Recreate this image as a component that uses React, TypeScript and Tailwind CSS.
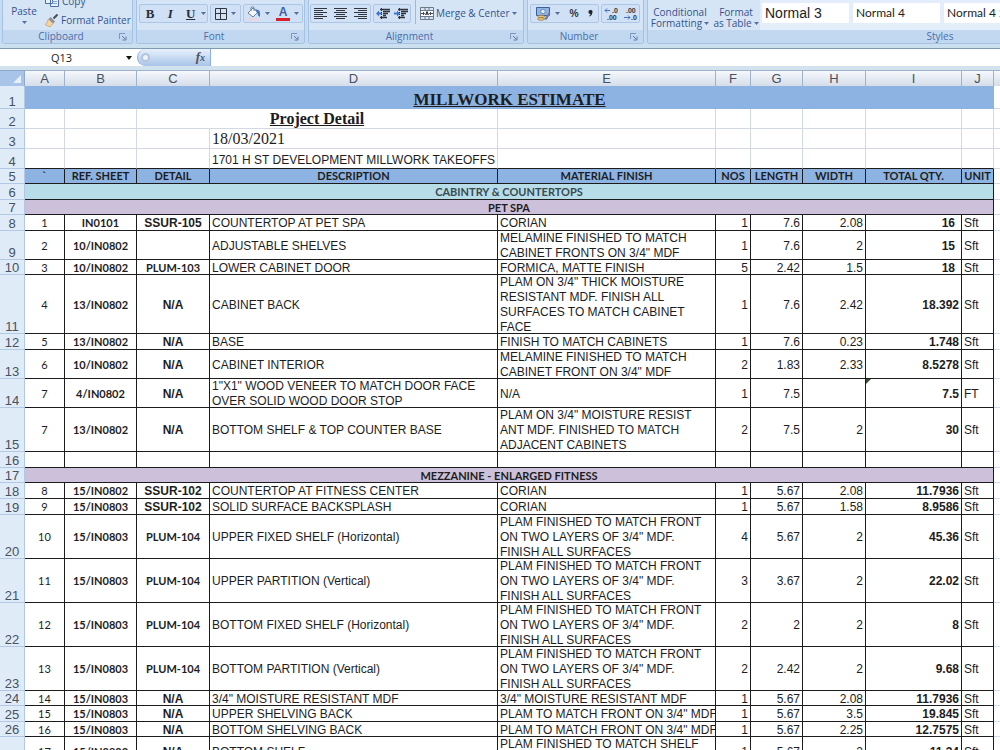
import React from 'react';
import clsx from 'clsx';

const columns = [
  { name: 'A', width: 'w-[40px]' },
  { name: 'B', width: 'w-[72px]' },
  { name: 'C', width: 'w-[73px]' },
  { name: 'D', width: 'w-[288px]' },
  { name: 'E', width: 'w-[218px]' },
  { name: 'F', width: 'w-[35px]' },
  { name: 'G', width: 'w-[52px]' },
  { name: 'H', width: 'w-[63px]' },
  { name: 'I', width: 'w-[96px]' },
  { name: 'J', width: 'w-[32px]' },
];

type Item = {
  row: number;
  h: string;
  no?: string;
  sheet?: string;
  detail?: string;
  desc?: string[];
  finish?: string[];
  nos?: string;
  length?: string;
  width?: string;
  total?: string;
  unit?: string;
  indent?: boolean;
  note?: boolean;
};

const petSpa: Item[] = [
  { row: 8, h: 'h-[15px]', no: '1', sheet: 'IN0101', detail: 'SSUR-105', desc: ['COUNTERTOP AT PET SPA'], finish: ['CORIAN'], nos: '1', length: '7.6', width: '2.08', total: '16', unit: 'Sft', indent: true },
  { row: 9, h: 'h-[28px]', no: '2', sheet: '10/IN0802', detail: '', desc: ['ADJUSTABLE SHELVES'], finish: ['MELAMINE FINISHED TO MATCH', 'CABINET FRONTS ON 3/4" MDF'], nos: '1', length: '7.6', width: '2', total: '15', unit: 'Sft', indent: true },
  { row: 10, h: 'h-[14px]', no: '3', sheet: '10/IN0802', detail: 'PLUM-103', desc: ['LOWER CABINET DOOR'], finish: ['FORMICA, MATTE FINISH'], nos: '5', length: '2.42', width: '1.5', total: '18', unit: 'Sft', indent: true },
  { row: 11, h: 'h-[58px]', no: '4', sheet: '13/IN0802', detail: 'N/A', desc: ['CABINET BACK'], finish: ['PLAM ON 3/4" THICK MOISTURE', 'RESISTANT MDF. FINISH ALL', 'SURFACES TO MATCH CABINET', 'FACE'], nos: '1', length: '7.6', width: '2.42', total: '18.392', unit: 'Sft' },
  { row: 12, h: 'h-[15px]', no: '5', sheet: '13/IN0802', detail: 'N/A', desc: ['BASE'], finish: ['FINISH TO MATCH CABINETS'], nos: '1', length: '7.6', width: '0.23', total: '1.748', unit: 'Sft' },
  { row: 13, h: 'h-[28px]', no: '6', sheet: '10/IN0802', detail: 'N/A', desc: ['CABINET INTERIOR'], finish: ['MELAMINE FINISHED TO MATCH', 'CABINET FRONT ON 3/4" MDF'], nos: '2', length: '1.83', width: '2.33', total: '8.5278', unit: 'Sft' },
  { row: 14, h: 'h-[28px]', no: '7', sheet: '4/IN0802', detail: 'N/A', desc: ['1"X1" WOOD VENEER TO MATCH DOOR FACE', 'OVER SOLID WOOD DOOR STOP'], finish: ['N/A'], nos: '1', length: '7.5', width: '', total: '7.5', unit: 'FT', note: true },
  { row: 15, h: 'h-[43px]', no: '7', sheet: '13/IN0802', detail: 'N/A', desc: ['BOTTOM SHELF & TOP COUNTER BASE'], finish: ['PLAM ON 3/4" MOISTURE RESIST', 'ANT MDF. FINISHED TO MATCH', 'ADJACENT CABINETS'], nos: '2', length: '7.5', width: '2', total: '30', unit: 'Sft' },
  { row: 16, h: 'h-[15px]' },
];

const plamFront = ['PLAM FINISHED TO MATCH FRONT', 'ON TWO LAYERS OF 3/4" MDF.', 'FINISH ALL SURFACES'];

const fitness: Item[] = [
  { row: 18, h: 'h-[15px]', no: '8', sheet: '15/IN0802', detail: 'SSUR-102', desc: ['COUNTERTOP AT FITNESS CENTER'], finish: ['CORIAN'], nos: '1', length: '5.67', width: '2.08', total: '11.7936', unit: 'Sft' },
  { row: 19, h: 'h-[15px]', no: '9', sheet: '15/IN0803', detail: 'SSUR-102', desc: ['SOLID SURFACE BACKSPLASH'], finish: ['CORIAN'], nos: '1', length: '5.67', width: '1.58', total: '8.9586', unit: 'Sft' },
  { row: 20, h: 'h-[43px]', no: '10', sheet: '15/IN0803', detail: 'PLUM-104', desc: ['UPPER FIXED SHELF (Horizontal)'], finish: plamFront, nos: '4', length: '5.67', width: '2', total: '45.36', unit: 'Sft' },
  { row: 21, h: 'h-[43px]', no: '11', sheet: '15/IN0803', detail: 'PLUM-104', desc: ['UPPER PARTITION (Vertical)'], finish: plamFront, nos: '3', length: '3.67', width: '2', total: '22.02', unit: 'Sft' },
  { row: 22, h: 'h-[43px]', no: '12', sheet: '15/IN0803', detail: 'PLUM-104', desc: ['BOTTOM FIXED SHELF (Horizontal)'], finish: plamFront, nos: '2', length: '2', width: '2', total: '8', unit: 'Sft' },
  { row: 23, h: 'h-[43px]', no: '13', sheet: '15/IN0803', detail: 'PLUM-104', desc: ['BOTTOM PARTITION (Vertical)'], finish: plamFront, nos: '2', length: '2.42', width: '2', total: '9.68', unit: 'Sft' },
  { row: 24, h: 'h-[14px]', no: '14', sheet: '15/IN0803', detail: 'N/A', desc: ['3/4" MOISTURE RESISTANT MDF'], finish: ['3/4" MOISTURE RESISTANT MDF'], nos: '1', length: '5.67', width: '2.08', total: '11.7936', unit: 'Sft' },
  { row: 25, h: 'h-[15px]', no: '15', sheet: '15/IN0803', detail: 'N/A', desc: ['UPPER SHELVING BACK'], finish: ['PLAM TO MATCH FRONT ON 3/4" MDF'], nos: '1', length: '5.67', width: '3.5', total: '19.845', unit: 'Sft' },
  { row: 26, h: 'h-[14px]', no: '16', sheet: '15/IN0803', detail: 'N/A', desc: ['BOTTOM SHELVING BACK'], finish: ['PLAM TO MATCH FRONT ON 3/4" MDF'], nos: '1', length: '5.67', width: '2.25', total: '12.7575', unit: 'Sft' },
  { row: 27, h: 'h-[28px]', no: '17', sheet: '15/IN0803', detail: 'N/A', desc: ['BOTTOM SHELF'], finish: ['PLAM FINISHED TO MATCH SHELF', 'FRONT ON 3/4" MDF'], nos: '1', length: '5.67', width: '2', total: '11.34', unit: 'Sft' },
];

const ink = 'border-r border-b border-[#1c1c1c]';
const faint = 'border-r border-b border-[#d3d9e3]';

/* ---------- Ribbon ---------- */

const Arrow = () => (
  <svg width="5" height="3" viewBox="0 0 5 3" className="shrink-0" aria-hidden="true">
    <path d="M0 0h5L2.5 3z" fill="#56709c" />
  </svg>
);

const Launcher = ({ label }: { label: string }) => (
  <button aria-label={label} className="h-[9px] w-[9px]">
    <svg width="8" height="8" viewBox="0 0 8 8" fill="none" aria-hidden="true">
      <path d="M.5 6V.5H6" stroke="#7d97bd" />
      <path d="M3 3l3 3M7 3.500V7H3.500" stroke="#5f7ba8" />
    </svg>
  </button>
);

type GroupProps = { title: string; className: string; launcher?: boolean; children: React.ReactNode };

const Group = ({ title, className, launcher = true, children }: GroupProps) => (
  <section
    aria-label={title}
    className={clsx('flex shrink-0 flex-col overflow-hidden rounded-b-[3px] border-x border-b border-[#a6c2e2] bg-[#d6e5f6]', className)}
  >
    <div className="flex h-[30px] overflow-hidden">{children}</div>
    <div className="flex h-[13px] items-center bg-[#c2d8f0] pr-1 text-[10px] text-[#4a6ea9]">
      <span className="flex-1 text-center leading-[13px]">{title}</span>
      {launcher && <Launcher label={`${title} options`} />}
    </div>
  </section>
);

const ToolBox = ({ className, children }: { className: string; children: React.ReactNode }) => (
  <div className={clsx('mt-1 flex h-[19px] shrink-0 items-center justify-around rounded-[2px] border border-[#aec6e5] bg-[#d0e1f5]', className)}>
    {children}
  </div>
);

const Tool = ({ label, children }: { label: string; children: React.ReactNode }) => (
  <button aria-label={label} className="flex h-[17px] items-center gap-1">
    {children}
  </button>
);

const AlignIcon = ({ kind }: { kind: 'left' | 'center' | 'right' }) => {
  const x = { left: 0, center: 2, right: 4 }[kind];
  return (
    <svg width="13" height="11" viewBox="0 0 13 11" stroke="#30343c" aria-hidden="true">
      <path d={`M0 .5h13M${x} 2.500h9M0 4.500h13M${x} 6.500h9M0 8.500h13M${x} 10.500h9`} />
    </svg>
  );
};

const IndentIcon = ({ more }: { more?: boolean }) => (
  <svg width="14" height="12" viewBox="0 0 14 12" aria-hidden="true">
    <path d="M4 1.500h10M7 3.500h7M7 5.500h5M7 7.500h3M4 9.500h7" stroke="#30343c" strokeWidth="1.400" />
    <path d={more ? 'M6 5.500L3 2.500v2H0v2h3v2z' : 'M0 5.500l3-3v2h3v2H3v2z'} fill="#3f74c4" />
    <path d="M5.500 0v12" stroke="#30343c" strokeDasharray="1 1" />
  </svg>
);

const MergeIcon = () => (
  <svg width="14" height="13" viewBox="0 0 14 13" fill="none" className="shrink-0" aria-hidden="true">
    <path d="M.5.5h13v12H.5zM.5 3.500h13M.5 9.500h13M5 .5v3M9 .5v3M5 9.500v3M9 9.500v3" stroke="#6f7885" />
    <path d="M1 4h12v5H1z" fill="#fff" />
    <path d="M1 6.500h3M13 6.500h-3M3 5l1.500 1.500L3 8M11 5L9.500 6.500 11 8" stroke="#3a4b6c" />
    <path d="M5.500 8L7 4.500 8.500 8M6 7h2" stroke="#222" />
  </svg>
);

const BucketIcon = () => (
  <svg width="14" height="15" viewBox="0 0 14 15" aria-hidden="true">
    <path d="M0 12h13v3H0z" fill="#ead7e6" />
    <path d="M6 2l5 4-5 5-5-4z" fill="#f5f8fc" stroke="#6d7f9c" />
    <path d="M4 5V1.500Q5.500 0 7 1.500V5" fill="none" stroke="#6d7f9c" />
    <path d="M8 3.500q5-.5 5 3.500v4l-2-1.500Q11 7 9.500 6z" fill="#4476bd" />
  </svg>
);

const BrushIcon = () => (
  <svg width="13" height="13" viewBox="0 0 13 13" className="shrink-0" aria-hidden="true">
    <path d="M12.500 .5L8.500 4.500" stroke="#4b4b55" strokeWidth="2" />
    <path d="M5.500 3l4.500 4.500-2 2L3.500 5z" fill="#8a8f9c" />
    <path d="M3.500 5l4.500 4.500L5 13 0 10.500q2.500-1.500 3.500-5.500z" fill="#f3d6a2" stroke="#b98a4a" strokeWidth=".6" />
  </svg>
);

const CurrencyIcon = () => (
  <svg width="15" height="14" viewBox="0 0 15 14" aria-hidden="true">
    <path d="M.5.5h13v8H.5z" fill="#8fb4e4" stroke="#3b5f9c" />
    <circle cx="7" cy="4.500" r="2.200" fill="#e3eefb" stroke="#3b5f9c" strokeWidth=".6" />
    <path d="M8 12l5-7 1.500 1.500-4 6.500z" fill="#6f7f9f" />
    <ellipse cx="5" cy="9.500" rx="3.500" ry="1.300" fill="#e8c47a" stroke="#8a6a2a" strokeWidth=".6" />
    <ellipse cx="5" cy="12" rx="3.500" ry="1.300" fill="#e8c47a" stroke="#8a6a2a" strokeWidth=".6" />
  </svg>
);

const DecimalIcon = ({ more }: { more?: boolean }) => (
  <svg width="14" height="14" viewBox="0 0 14 14" fontSize="7" fontWeight="bold" fontFamily="Liberation Sans, sans-serif" fill="#30343c" aria-hidden="true">
    <text x={more ? 8 : 3} y="6">{more ? '.0' : '.00'}</text>
    <text x={more ? 3 : 8} y="13">{more ? '.00' : '.0'}</text>
    <path d={more ? 'M1 3.500h5M3 1.500l-2 2 2 2' : 'M1 10.500h6M5 8.500l2 2-2 2'} fill="none" stroke="#3f74c4" />
  </svg>
);

const StyleCard = ({ name, className }: { name: string; className: string }) => (
  <button className={clsx('h-5 w-[87px] shrink-0 overflow-hidden bg-white px-[3px] text-left whitespace-nowrap text-[#1d1d1d]', className)}>
    {name}
  </button>
);

const Ribbon = () => (
  <header className="h-[49px] overflow-hidden border-b border-[#7e9ab5] bg-[#cbe0ee] font-['Open_Sans',sans-serif] text-[10px] text-[#34548c]">
    <div className="flex h-[44px] gap-[3px] bg-[#c5dbf2] pl-[2px]">
      <Group title="Clipboard" className="w-[131px]">
        <button className="flex w-[42px] shrink-0 flex-col items-center justify-end gap-1 pb-[6px] leading-3">
          <span>Paste</span>
          <Arrow />
        </button>
        <div className="flex flex-1 flex-col justify-end">
          <button className="flex h-[18px] items-center gap-[3px] leading-[18px]">
            <svg width="14" height="12" viewBox="0 0 14 12" aria-hidden="true">
              <path d="M.5.5h7v8h-7zM5.500 3.500h8v8h-8z" fill="#e8f1fc" stroke="#4a6ea9" />
              <path d="M7 6.500h5M7 8.500h5" stroke="#7ea0d3" />
            </svg>
            Copy
          </button>
          <button className="flex h-[20px] items-center gap-[3px] leading-5 whitespace-nowrap">
            <BrushIcon />
            Format Painter
          </button>
        </div>
      </Group>

      <Group title="Font" className="w-[169px]">
        <div className="flex gap-[2px] pl-[2px] text-[#2b2f38]">
          <ToolBox className="w-[69px]">
            <button className="w-[19px] font-['Liberation_Serif',serif] text-[13px] font-bold">B</button>
            <button className="w-[19px] font-['Liberation_Serif',serif] text-[13px] font-bold italic">I</button>
            <button className="w-[19px] font-['Liberation_Serif',serif] text-[13px] font-bold underline">U</button>
            <Arrow />
          </ToolBox>
          <ToolBox className="w-[31px]">
            <Tool label="Borders">
              <svg width="12" height="12" viewBox="0 0 12 12" fill="none" stroke="#30343c" aria-hidden="true">
                <path d="M.5.5h11v11H.5zM5.500 .5v11M.5 5.500h11" />
              </svg>
              <Arrow />
            </Tool>
          </ToolBox>
          <ToolBox className="w-[60px]">
            <Tool label="Fill color">
              <BucketIcon />
              <Arrow />
            </Tool>
            <Tool label="Font color">
              <span className="w-[14px] border-b-[3px] border-[#d6202a] text-center font-['Liberation_Sans',sans-serif] text-[12px] leading-[12px] font-bold text-[#3d62a0]">A</span>
              <Arrow />
            </Tool>
          </ToolBox>
        </div>
      </Group>

      <Group title="Alignment" className="w-[216px]">
        <div className="flex gap-[2px] pl-[1px]">
          <ToolBox className="w-[61px]">
            <Tool label="Align left"><AlignIcon kind="left" /></Tool>
            <Tool label="Align center"><AlignIcon kind="center" /></Tool>
            <Tool label="Align right"><AlignIcon kind="right" /></Tool>
          </ToolBox>
          <ToolBox className="w-[38px]">
            <Tool label="Decrease indent"><IndentIcon /></Tool>
            <Tool label="Increase indent"><IndentIcon more /></Tool>
          </ToolBox>
          <div className="ml-[2px] h-6 w-px bg-[#9fb9da]" />
          <button className="mt-1 ml-[2px] flex h-[19px] items-center gap-[2px] whitespace-nowrap">
            <MergeIcon />
            Merge &amp; Center
            <Arrow />
          </button>
        </div>
      </Group>

      <Group title="Number" className="w-[117px]">
        <div className="flex gap-[2px] pl-[2px] text-[#2b2f38]">
          <ToolBox className="w-[69px]">
            <Tool label="Accounting format">
              <CurrencyIcon />
              <Arrow />
            </Tool>
            <button className="text-[11px] font-semibold">%</button>
            <button aria-label="Comma style" className="flex h-[17px] items-center">
              <svg width="5" height="7" viewBox="0 0 5 7" aria-hidden="true">
                <path d="M2.300 0A2 2 0 0 1 4.500 2.200Q4.500 5 1.500 6.500L1 6Q2.500 5 2.500 4A2 2 0 0 1 2.300 0z" fill="#22262e" />
              </svg>
            </button>
          </ToolBox>
          <ToolBox className="w-[39px]">
            <Tool label="Increase decimal"><DecimalIcon more /></Tool>
            <Tool label="Decrease decimal"><DecimalIcon /></Tool>
          </ToolBox>
        </div>
      </Group>

      <Group title="Styles" className="w-[590px]" launcher={false}>
        <button className="w-[64px] pt-[5px] leading-[11px]">
          Conditional
          <span className="flex items-center justify-center gap-[2px]">Formatting <Arrow /></span>
        </button>
        <button className="w-[48px] pt-[5px] leading-[11px]">
          Format
          <span className="flex items-center justify-center gap-[2px] whitespace-nowrap">as Table <Arrow /></span>
        </button>
        <div className="flex gap-[4px] bg-[#e4eefa] px-[2px] pt-[3px]">
          <StyleCard name="Normal 3" className="font-['Liberation_Sans',sans-serif] text-[14px] leading-4" />
          <StyleCard name="Normal 4" className="font-['Lato',sans-serif] text-[12px]" />
          <StyleCard name="Normal 4 2" className="font-['Lato',sans-serif] text-[12px]" />
        </div>
      </Group>
    </div>
  </header>
);

const FormulaBar = () => (
  <div className="flex h-[21px] border-b-4 border-[#d3e3ee] bg-white">
    <div className="flex w-[137px] items-center pr-[5px]">
      <input
        aria-label="Name box"
        defaultValue="Q13"
        className="w-[123px] bg-transparent text-center font-['Open_Sans',sans-serif] text-[11px] leading-4 text-[#1d1d1d] outline-none"
      />
      <svg width="6" height="4" viewBox="0 0 6 4" className="ml-[3px]" aria-hidden="true">
        <path d="M0 0h6L3 4z" fill="#111" />
      </svg>
    </div>
    <div className="flex w-[74px] items-center justify-between rounded-l-full border-r border-l border-[#8fb0da] bg-linear-to-b from-[#e8f1fb] to-[#a9c4ea] pr-[5px] pl-[3px]">
      <span className="h-[9px] w-[9px] rounded-full border-2 border-[#b4c4da] bg-[#eef3f9]" />
      <button className="font-['Liberation_Serif',serif] text-[13px] leading-4 font-bold text-[#4a5262] italic">
        f<span className="text-[10px]">x</span>
      </button>
    </div>
    <input aria-label="Formula" className="min-w-0 flex-1 bg-white px-1 text-[11px] outline-none" />
  </div>
);

/* ---------- Sheet ---------- */

const RowHead = ({ row }: { row: number }) => (
  <th scope="row" className="border-r border-b border-[#b3c8e4] bg-[#e0ebf8] p-0 align-bottom text-[13px] leading-[13px] font-normal text-[#47515f]">
    <div className="flex h-0 items-end justify-center">{row}</div>
  </th>
);

const Tail = () => <td className="border-b border-[#d3d9e3] p-0" />;

const Band = ({ row, h, className, children }: { row: number; h: string; className: string; children: React.ReactNode }) => (
  <tr>
    <RowHead row={row} />
    <td colSpan={10} className={clsx('p-0 text-center', className)}>
      <div className={clsx('flex items-center justify-center', h)}>{children}</div>
    </td>
    <Tail />
  </tr>
);

const ItemRow = ({ item }: { item: Item }) => {
  const box = clsx('flex items-center', item.h);
  const arial = clsx(box, 'pt-[2px]');
  const calibri = "font-['Lato',sans-serif] text-[11px] lining-nums";
  const plum = item.detail?.startsWith('PLUM');
  const lines = (list?: string[]) => (
    <div className={clsx(arial, 'pl-[2px] whitespace-nowrap')}>
      <span>{list?.map((line) => <span key={line} className="block">{line}</span>)}</span>
    </div>
  );
  return (
    <tr>
      <RowHead row={item.row} />
      <td className={clsx(ink, calibri, 'p-0')}><div className={clsx(box, 'justify-center')}>{item.no}</div></td>
      <td className={clsx(ink, calibri, 'p-0 font-bold')}><div className={clsx(box, 'justify-center')}>{item.sheet}</div></td>
      <td className={clsx(ink, 'p-0 font-bold', plum && calibri)}>
        <div className={clsx(plum ? box : arial, 'justify-center')}>{item.detail}</div>
      </td>
      <td className={clsx(ink, 'p-0')}>{lines(item.desc)}</td>
      <td className={clsx(ink, 'overflow-hidden p-0')}>{lines(item.finish)}</td>
      <td className={clsx(ink, 'p-0')}><div className={clsx(arial, 'justify-end pr-[2px]')}>{item.nos}</div></td>
      <td className={clsx(ink, 'p-0')}><div className={clsx(arial, 'justify-end pr-[2px]')}>{item.length}</div></td>
      <td className={clsx(ink, 'p-0')}><div className={clsx(arial, 'justify-end pr-[2px]')}>{item.width}</div></td>
      <td className={clsx(ink, 'relative p-0 font-bold')}>
        {item.note && (
          <svg width="5" height="5" viewBox="0 0 5 5" className="absolute top-0 left-0" aria-hidden="true">
            <path d="M0 0h5L0 5z" fill="#3c4a3c" />
          </svg>
        )}
        <div className={clsx(arial, 'justify-end', item.indent ? 'pr-[6px]' : 'pr-[2px]')}>{item.total}</div>
      </td>
      <td className={clsx(ink, 'p-0')}><div className={clsx(arial, 'pl-[2px]')}>{item.unit}</div></td>
      <Tail />
    </tr>
  );
};

const headings = ['`', 'REF. SHEET', 'DETAIL', 'DESCRIPTION', 'MATERIAL FINISH', 'NOS', 'LENGTH', 'WIDTH', 'TOTAL QTY.', 'UNIT'];

const Sheet = () => (
  <table className="w-full table-fixed border-separate border-spacing-0 font-['Liberation_Sans',sans-serif] text-[12px] leading-[15px] text-[#1d1d1d]">
    <colgroup>
      <col className="w-[25px]" />
      {columns.map((c) => <col key={c.name} className={c.width} />)}
      <col />
    </colgroup>
    <thead>
      <tr className="bg-linear-to-b from-[#f8fafd] to-[#d5dde9] text-[13px] text-[#47515f]">
        <th className="border-t border-r border-[#8fa9cc] bg-[#a9c4e9] p-0">
          <svg width="8" height="8" viewBox="0 0 8 8" className="mr-[3px] ml-auto" aria-hidden="true">
            <path d="M8 0v8H0z" fill="#e6effa" />
          </svg>
        </th>
        {columns.map((c) => (
          <th key={c.name} scope="col" className="border-t border-r border-[#9db3cd] p-0 font-normal">{c.name}</th>
        ))}
        <th className="border-t border-[#9db3cd] p-0" />
      </tr>
    </thead>
    <tbody>
      <Band row={1} h="h-[23px]" className="bg-[#8db3e2]">
        <span className="pt-[3px] font-['Liberation_Serif',serif] text-[17px] font-bold underline">MILLWORK ESTIMATE</span>
      </Band>
      <tr>
        <RowHead row={2} />
        <td className={clsx(faint, 'p-0')} />
        <td className={clsx(faint, 'p-0')} />
        <td colSpan={2} className={clsx(faint, 'p-0')}>
          <div className="flex h-[19px] items-center justify-center font-['Liberation_Serif',serif] text-[16px] font-bold underline">Project Detail</div>
        </td>
        {columns.slice(4).map((c) => <td key={c.name} className={clsx(faint, 'p-0')} />)}
        <Tail />
      </tr>
      <tr>
        <RowHead row={3} />
        {columns.map((c) => (
          <td key={c.name} className={clsx(faint, 'p-0')}>
            {c.name === 'D' && <div className="flex h-[19px] items-center pl-[2px] font-['Liberation_Serif',serif] text-[16px]">18/03/2021</div>}
          </td>
        ))}
        <Tail />
      </tr>
      <tr>
        <RowHead row={4} />
        {columns.map((c) => (
          <td key={c.name} className="border-r border-b border-r-[#d3d9e3] border-b-[#1c1c1c] p-0">
            {c.name === 'D' && <div className="flex h-[19px] items-end pl-[2px] whitespace-nowrap">1701 H ST DEVELOPMENT MILLWORK TAKEOFFS</div>}
          </td>
        ))}
        <Tail />
      </tr>
      <tr>
        <RowHead row={5} />
        {headings.map((text) => (
          <th key={text} scope="col" className={clsx(ink, "bg-[#8db3e2] p-0 font-['Lato',sans-serif] text-[11px] font-bold")}>
            <div className="flex h-[14px] items-center justify-center pb-[2px] whitespace-nowrap">{text}</div>
          </th>
        ))}
        <Tail />
      </tr>
      <Band row={6} h="h-[15px]" className={clsx(ink, "bg-[#b7dde8] font-['Lato',sans-serif] text-[11px] font-bold text-[#3a4a50]")}>
        CABINTRY &amp; COUNTERTOPS
      </Band>
      <Band row={7} h="h-[14px]" className={clsx(ink, "bg-[#ccc0da] font-['Lato',sans-serif] text-[11px] font-bold")}>
        PET SPA
      </Band>
      {petSpa.map((item) => <ItemRow key={item.row} item={item} />)}
      <Band row={17} h="h-[14px]" className={clsx(ink, "bg-[#ccc0da] font-['Lato',sans-serif] text-[11px] font-bold")}>
        MEZZANINE - ENLARGED FITNESS
      </Band>
      {fitness.map((item) => <ItemRow key={item.row} item={item} />)}
    </tbody>
  </table>
);

const App: React.FC = () => {
  return (
    <div className="h-screen overflow-hidden bg-white">
      <Ribbon />
      <FormulaBar />
      <Sheet />
    </div>
  );
};

export default App;
